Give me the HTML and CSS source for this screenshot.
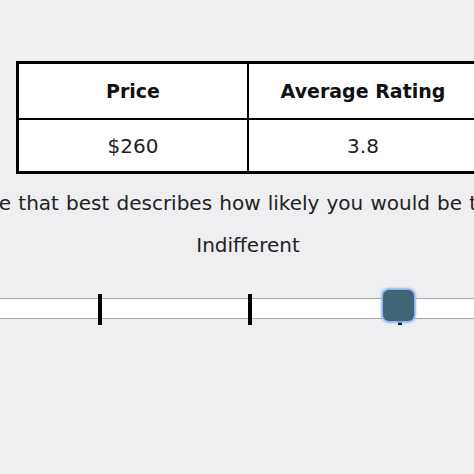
FILE: index.html
```html
<!DOCTYPE html>
<html>
<head>
<meta charset="utf-8">
<link rel="stylesheet" href="styles.css">
</head>
<body>
<div class="page">
  <div class="content">
    <table class="info">
      <tr><th>Price</th><th>Average Rating</th></tr>
      <tr><td>$260</td><td>3.8</td></tr>
    </table>
    <div class="question"><span>Please select the point on the scale that best describes how likely you would be to purchase this product at this price.</span></div>
    <div class="label">Indifferent</div>
  </div>
  <div class="slider">
    <div class="track">
      <span class="tick"></span>
      <span class="tick"></span>
      <span class="tick"></span>
    </div>
    <div class="thumb"></div>
  </div>
</div>
</body>
</html>
```

FILE: styles.css
```css
html, body {
  margin: 0;
  padding: 0;
  background: #efeff2;
}
body {
  width: 474px;
  height: 474px;
  overflow: hidden;
  font-family: "DejaVu Sans", Verdana, sans-serif;
  color: #222;
}
.page {
  padding-top: 61px;
}
.content {
  margin-left: 16px;
  width: 464px;
}
.info {
  border-collapse: collapse;
  border: 3px solid #000;
  background: #fff;
  width: 464px;
  table-layout: fixed;
  font-size: 19px;
}
.info th, .info td {
  border: 2px solid #000;
  text-align: center;
  padding: 0;
}
.info th {
  height: 54px;
  font-weight: bold;
  color: #111;
}
.info td {
  height: 51px;
  font-size: 20px;
}
.question {
  display: flex;
  justify-content: center;
  white-space: nowrap;
  font-size: 20px;
  word-spacing: 0.8px;
  margin-top: 17px;
  padding-left: 5px;
  line-height: 24px;
}
.label {
  text-align: center;
  font-size: 20px;
  line-height: 24px;
  margin-top: 18px;
}
.slider {
  position: relative;
  margin-top: 33px;
  padding-top: 8px;
  height: 26px;
}
.track {
  height: 19px;
  background: #fff;
  border-top: 1px solid #a8a8a8;
  border-bottom: 1px solid #a8a8a8;
  display: flex;
  padding-left: 98px;
  gap: 146px;
}
.tick {
  width: 4px;
  height: 31px;
  margin-top: -5px;
  background: #000;
  flex: none;
}
.thumb {
  position: absolute;
  left: 383px;
  top: 0;
  width: 31px;
  height: 31px;
  background: #3f6677;
  border-radius: 6px;
  box-shadow: 0 0 2px 2px #8fb3f0;
}
```
